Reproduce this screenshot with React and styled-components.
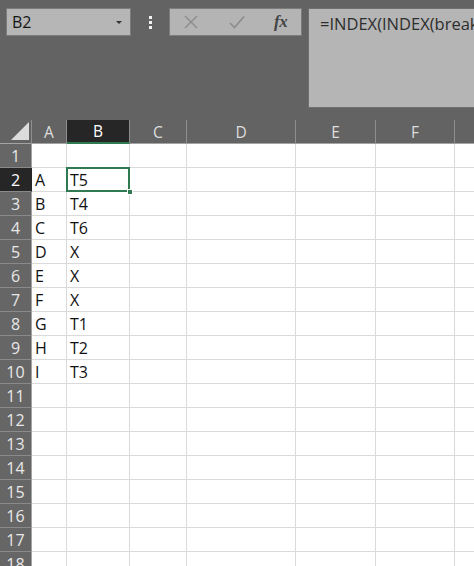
import React from 'react';
import styled, { createGlobalStyle } from 'styled-components';

const Global = createGlobalStyle`
  html, body { margin: 0; padding: 0; background: #ffffff; overflow: hidden; }
  body { font-family: "Segoe UI", "Open Sans", "Noto Sans", sans-serif; }
  * { box-sizing: border-box; }
`;

const Page = styled.div`
  width: 474px;
  height: 566px;
  overflow: hidden;
  display: flex;
  flex-direction: column;
`;

const TopBar = styled.div`
  height: 120px;
  flex: none;
  background: #636363;
  display: flex;
  align-items: flex-start;
  padding: 8px 0 0 6px;
`;

const NameBox = styled.div`
  width: 125px;
  height: 28px;
  background: #b6b6b6;
  border: 1px solid #7c7c7c;
  display: flex;
  align-items: center;
  justify-content: space-between;
  padding: 0 8px 0 5px;
  font-size: 16px;
  color: #151515;
`;

const Caret = styled.span`
  width: 0;
  height: 0;
  border-left: 3px solid transparent;
  border-right: 3px solid transparent;
  border-top: 3px solid #333;
`;

const DotsWrap = styled.div`
  width: 38px;
  height: 28px;
  display: flex;
  flex-direction: column;
  align-items: center;
  justify-content: center;
  gap: 2px;
`;

const Dot = styled.span`
  width: 3px;
  height: 3px;
  background: #f2f2f2;
`;

const FxButtons = styled.div`
  width: 133px;
  height: 28px;
  background: #b4b4b4;
  border: 1px solid #7c7c7c;
  display: flex;
  align-items: center;
  padding-left: 11px;
  gap: 26px;
`;

const IconBtn = styled.span`
  width: 20px;
  height: 20px;
  display: flex;
  align-items: center;
  justify-content: center;
`;

const FxLabel = styled.span`
  font-family: "Liberation Serif", "DejaVu Serif", serif;
  font-style: italic;
  font-weight: bold;
  font-size: 17px;
  color: #444;
  letter-spacing: -0.5px;
  margin-left: 1px;
`;

const FormulaInput = styled.div`
  margin-left: 6px;
  flex: 1;
  height: 100px;
  background: #b5b5b5;
  border-left: 1px solid #707070;
  border-top: 1px solid #707070;
  border-bottom: 1px solid #707070;
  padding: 3px 0 0 11px;
  font-size: 16.5px;
  color: #2e2e2e;
  white-space: nowrap;
  overflow: hidden;
`;

const Sheet = styled.div`
  flex: 1;
  display: grid;
  grid-template-columns: 32px 35px 63px 57px 109px 80px 79px 100px;
  grid-auto-rows: 24px;
  overflow: hidden;
`;

const Corner = styled.div`
  background: #636363;
  border-right: 1px solid #8e8e8e;
  border-bottom: 1px solid #a3a3a3;
  display: flex;
  align-items: flex-end;
  justify-content: flex-end;
  padding: 0 2px 3px 0;
`;

const Triangle = styled.span`
  width: 0;
  height: 0;
  border-left: 18px solid transparent;
  border-bottom: 18px solid #dcdcdc;
`;

const ColHeader = styled.div`
  background: ${p => (p.$selected ? '#262626' : '#636363')};
  color: ${p => (p.$selected ? '#ffffff' : '#dedede')};
  border-right: 1px solid #8e8e8e;
  border-bottom: ${p => (p.$selected ? '2px solid #2f7a50' : '1px solid #a3a3a3')};
  display: flex;
  align-items: center;
  justify-content: center;
  font-size: 15.5px;
`;

const RowHeader = styled.div`
  background: ${p => (p.$selected ? '#262626' : '#666666')};
  color: ${p => (p.$selected ? '#ffffff' : '#e8e8e8')};
  border-right: 1px solid ${p => (p.$selected ? '#262626' : '#a3a3a3')};
  border-bottom: 1px solid #8a8a8a;
  display: flex;
  align-items: center;
  justify-content: center;
  font-size: 16px;
`;

const Cell = styled.div`
  position: relative;
  background: #ffffff;
  border-right: 1px solid #dadada;
  border-bottom: 1px solid #dadada;
  display: flex;
  align-items: center;
  padding: 1px 0 0 3px;
  font-size: 16px;
  color: #111;
  white-space: nowrap;
  ${p =>
    p.$active &&
    `
    &::after {
      content: '';
      position: absolute;
      left: -1px;
      top: -1px;
      right: -1px;
      bottom: -1px;
      border: 2px solid #2f7a50;
      pointer-events: none;
    }
  `}
`;

const FillHandle = styled.span`
  position: absolute;
  right: -4px;
  bottom: -4px;
  width: 6px;
  height: 6px;
  background: #2f7a50;
  border: 1px solid #ffffff;
  z-index: 2;
`;

const columns = ['A', 'B', 'C', 'D', 'E', 'F', 'G'];
const data = {
  2: ['A', 'T5'],
  3: ['B', 'T4'],
  4: ['C', 'T6'],
  5: ['D', 'X'],
  6: ['E', 'X'],
  7: ['F', 'X'],
  8: ['G', 'T1'],
  9: ['H', 'T2'],
  10: ['I', 'T3'],
};

const XIcon = () => (
  <svg width="16" height="16" viewBox="0 0 16 16">
    <path d="M2 2 L14 14 M14 2 L2 14" stroke="#8c8c8c" strokeWidth="1.4" fill="none" />
  </svg>
);

const CheckIcon = () => (
  <svg width="18" height="16" viewBox="0 0 18 16">
    <path d="M2 9 L6.5 13.5 L16 2.5" stroke="#8c8c8c" strokeWidth="1.6" fill="none" />
  </svg>
);

export default function App() {
  const rows = Array.from({ length: 18 }, (_, i) => i + 1);
  return (
    <Page>
      <Global />
      <TopBar>
        <NameBox>
          B2
          <Caret />
        </NameBox>
        <DotsWrap>
          <Dot />
          <Dot />
          <Dot />
        </DotsWrap>
        <FxButtons>
          <IconBtn><XIcon /></IconBtn>
          <IconBtn><CheckIcon /></IconBtn>
          <FxLabel>fx</FxLabel>
        </FxButtons>
        <FormulaInput>=INDEX(INDEX(breakpoints,0,1),MATCH(</FormulaInput>
      </TopBar>
      <Sheet>
        <Corner>
          <Triangle />
        </Corner>
        {columns.map(c => (
          <ColHeader key={c} $selected={c === 'B'}>
            {c}
          </ColHeader>
        ))}
        {rows.map(r => (
          <React.Fragment key={r}>
            <RowHeader $selected={r === 2}>{r}</RowHeader>
            {columns.map((c, ci) => {
              const v = data[r] && ci < 2 ? data[r][ci] : '';
              const active = r === 2 && c === 'B';
              return (
                <Cell key={c} $active={active}>
                  {v}
                  {active && <FillHandle />}
                </Cell>
              );
            })}
          </React.Fragment>
        ))}
      </Sheet>
    </Page>
  );
}
